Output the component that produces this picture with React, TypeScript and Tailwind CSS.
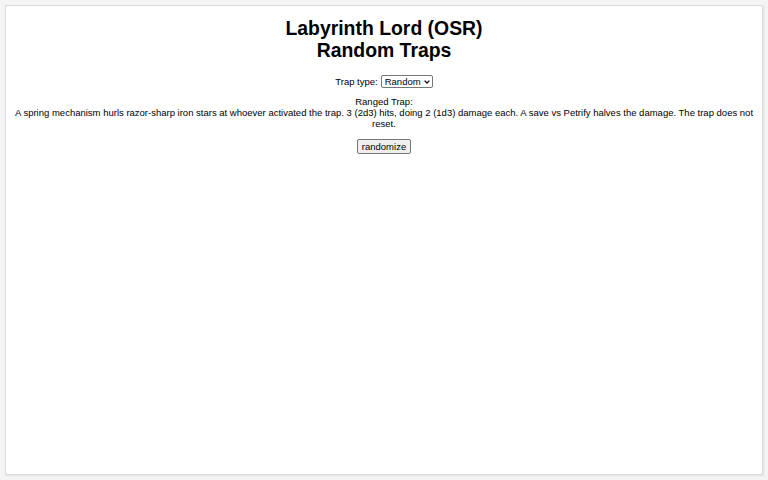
import { useState } from "react";

const traps = [
  {
    kind: "Ranged Trap",
    text: "A spring mechanism hurls razor-sharp iron stars at whoever activated the trap. 3 (2d3) hits, doing 2 (1d3) damage each. A save vs Petrify halves the damage. The trap does not reset.",
  },
];

export default function App() {
  const [type, setType] = useState("Random");
  const trap = traps[0];

  return (
    <div className="min-h-screen bg-[#f4f4f4] p-[5px] font-['Liberation_Sans',Arial,sans-serif] text-black">
      <div className="h-[470px] border border-[#dcdcdc] bg-white px-[6px] pt-[11px] text-center shadow-[1px_1px_2px_rgba(0,0,0,0.08)]">
        <h1 className="text-[19.4px] font-bold leading-[22px]">
          Labyrinth Lord (OSR)
          <br />
          Random Traps
        </h1>

        <div className="mt-[14px] flex items-center justify-center gap-[3px] text-[9.5px] leading-[11px]">
          <span>Trap type:</span>
          <span className="relative inline-flex">
            <select
              value={type}
              onChange={(e) => setType(e.target.value)}
              className="h-[13px] appearance-none rounded-[2px] border border-[#767676] bg-white pl-[3px] pr-[11px] text-[9.5px] leading-[11px]"
            >
              <option>Random</option>
              <option>Ranged</option>
              <option>Pit</option>
              <option>Magic</option>
            </select>
            <svg
              className="pointer-events-none absolute right-[3px] top-[4.5px]"
              width="6"
              height="4"
              viewBox="0 0 6 4"
            >
              <path d="M0.6 0.6 L3 3 L5.4 0.6" fill="none" stroke="#111" strokeWidth="1.3" />
            </svg>
          </span>
        </div>

        <div className="mt-[8px] text-[9.5px] leading-[11px]">
          <div>{trap.kind}:</div>
          <div>{trap.text}</div>
        </div>

        <button className="mt-[10px] rounded-[2px] border border-[#767676] bg-[#efefef] px-[4px] py-[1px] text-[9.5px] leading-[11px]">
          randomize
        </button>
      </div>
    </div>
  );
}
